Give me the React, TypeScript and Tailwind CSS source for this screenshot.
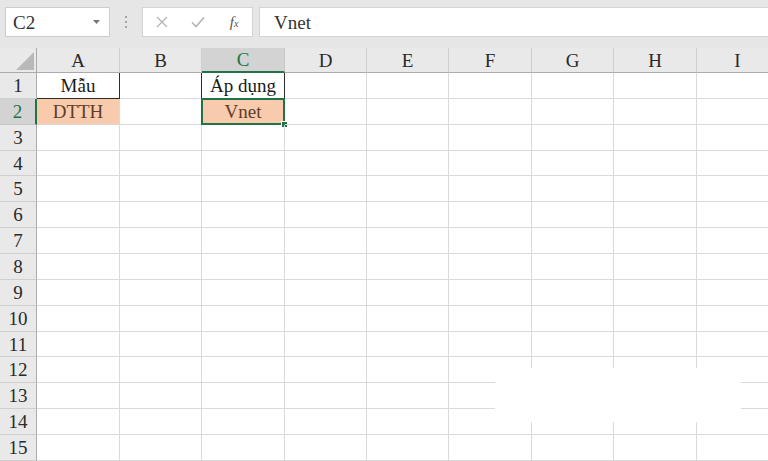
import React from "react";

const cols = [
  { l: "A", w: "w-[83px]" },
  { l: "B", w: "w-[82px]" },
  { l: "C", w: "w-[83px]" },
  { l: "D", w: "w-[82px]" },
  { l: "E", w: "w-[82px]" },
  { l: "F", w: "w-[83px]" },
  { l: "G", w: "w-[82px]" },
  { l: "H", w: "w-[83px]" },
  { l: "I", w: "w-[82px]" },
];

const rowH = [
  "h-[26px]", "h-[26px]", "h-[26px]", "h-[25px]", "h-[26px]",
  "h-[26px]", "h-[26px]", "h-[26px]", "h-[26px]", "h-[26px]",
  "h-[25px]", "h-[26px]", "h-[26px]", "h-[26px]", "h-[26px]",
];

function Cell({ r, c, w }: { r: number; c: number; w: string }) {
  let content: React.ReactNode = null;
  let cls = "border-r border-b border-[#dadada]";
  let bg = "";
  if (r === 1 && c === 0) {
    content = "Mẫu";
    cls = "border-r border-b border-r-[#2b2b2b] border-b-[#2b2b2b]";
  }
  if (r === 1 && c === 2) {
    content = "Áp dụng";
    cls = "border-l border-r border-b border-l-[#2b2b2b] border-r-[#2b2b2b] border-b-[#dadada] -ml-[1px] w-[84px]";
  }
  if (r === 2 && c === 0) {
    content = "DTTH";
    bg = "bg-[#f8cbad] text-[#5e3d2a]";
  }
  if (r === 2 && c === 2) {
    content = "Vnet";
    bg = "bg-[#f8cbad] text-[#5e3d2a]";
  }
  return (
    <div
      className={`${w} ${cls} ${bg} relative flex shrink-0 items-center justify-center font-['Liberation_Serif',serif] text-[19px] leading-none text-[#1a1a1a]`}
    >
      {content}
      {r === 2 && c === 2 && (
        <div className="absolute -left-[1px] -top-[1px] -right-[1px] -bottom-[1px] border-2 border-[#217346]">
          <div className="absolute -right-[5px] -bottom-[5px] h-[7px] w-[7px] bg-[#217346] border border-white" />
        </div>
      )}
    </div>
  );
}

export default function App() {
  return (
    <div className="relative h-[461px] w-[768px] overflow-hidden bg-white font-['Liberation_Serif',serif] text-[#222]">
      {/* Top bar */}
      <div className="flex h-[48px] items-start bg-[#e6e6e6] pt-[7px]">
        <div className="ml-[5px] flex h-[30px] w-[105px] items-center justify-between border border-[#cdcdcd] bg-white pl-[7px] pr-[9px]">
          <span className="font-['Liberation_Serif',serif] text-[19px] leading-none text-[#333]">C2</span>
          <svg width="7" height="4" viewBox="0 0 7 4">
            <path d="M0 0 L7 0 L3.5 4 Z" fill="#777" />
          </svg>
        </div>
        <div className="flex h-[30px] w-[32px] flex-col items-center justify-center gap-[3px]">
          <div className="h-[2px] w-[2px] bg-[#a5a5a5]" />
          <div className="h-[2px] w-[2px] bg-[#a5a5a5]" />
          <div className="h-[2px] w-[2px] bg-[#a5a5a5]" />
        </div>
        <div className="flex h-[30px] w-[111px] items-center border border-[#d4d4d4] bg-white">
          <div className="flex w-[36px] justify-center pl-[2px]">
            <svg width="12" height="12" viewBox="0 0 12 12">
              <path d="M1 1 L11 11 M11 1 L1 11" stroke="#b4b4b4" strokeWidth="1.3" fill="none" />
            </svg>
          </div>
          <div className="flex w-[38px] justify-center">
            <svg width="14" height="12" viewBox="0 0 14 12">
              <path d="M1 6.5 L5 10.5 L13 1.5" stroke="#b4b4b4" strokeWidth="1.6" fill="none" />
            </svg>
          </div>
          <div className="flex w-[36px] justify-center">
            <span className="font-['Liberation_Serif',serif] text-[15px] italic leading-none text-[#555]">
              f<span className="text-[10px]">x</span>
            </span>
          </div>
        </div>
        <div className="ml-[6px] flex h-[30px] flex-1 items-center border-y border-l border-[#d4d4d4] bg-white pl-[14px]">
          <span className="font-['Liberation_Serif',serif] text-[19px] leading-none text-[#333]">Vnet</span>
        </div>
      </div>

      {/* Column header */}
      <div className="flex h-[25px]">
        <div className="relative w-[37px] shrink-0 border-r border-b border-[#ababab] bg-[#e9e9e9]">
          <svg className="absolute right-[2px] bottom-[2px]" width="18" height="18" viewBox="0 0 18 18">
            <path d="M18 0 L18 18 L0 18 Z" fill="#b9b9b9" />
          </svg>
        </div>
        {cols.map((c, i) =>
          i === 2 ? (
            <div
              key={c.l}
              className={`${c.w} flex shrink-0 items-center justify-center border-r border-r-[#c8c8c8] border-b-2 border-b-[#217346] bg-[#d3d3d3] text-[19px] leading-none text-[#217346]`}
            >
              {c.l}
            </div>
          ) : (
            <div
              key={c.l}
              className={`${c.w} flex shrink-0 items-center justify-center border-r border-b border-r-[#cfcfcf] border-b-[#ababab] bg-[#e9e9e9] text-[19px] leading-none text-[#2a2a2a]`}
            >
              {c.l}
            </div>
          )
        )}
      </div>

      {/* Rows */}
      {rowH.map((h, ri) => {
        const r = ri + 1;
        return (
          <div key={r} className={`flex ${h}`}>
            {r === 2 ? (
              <div className="flex w-[37px] shrink-0 items-center justify-center border-r-2 border-b border-r-[#217346] border-b-[#c4c4c4] bg-[#d3d3d3] text-[19px] leading-none text-[#217346]">
                {r}
              </div>
            ) : (
              <div className="flex w-[37px] shrink-0 items-center justify-center border-r border-b border-r-[#ababab] border-b-[#cfcfcf] bg-[#e9e9e9] text-[19px] leading-none text-[#2a2a2a]">
                {r}
              </div>
            )}
            {cols.map((c, ci) => (
              <Cell key={c.l} r={r} c={ci} w={c.w} />
            ))}
          </div>
        );
      })}

      {/* erased patch */}
      <div className="absolute left-[495px] top-[368px] h-[54px] w-[246px] bg-white" />
    </div>
  );
}
